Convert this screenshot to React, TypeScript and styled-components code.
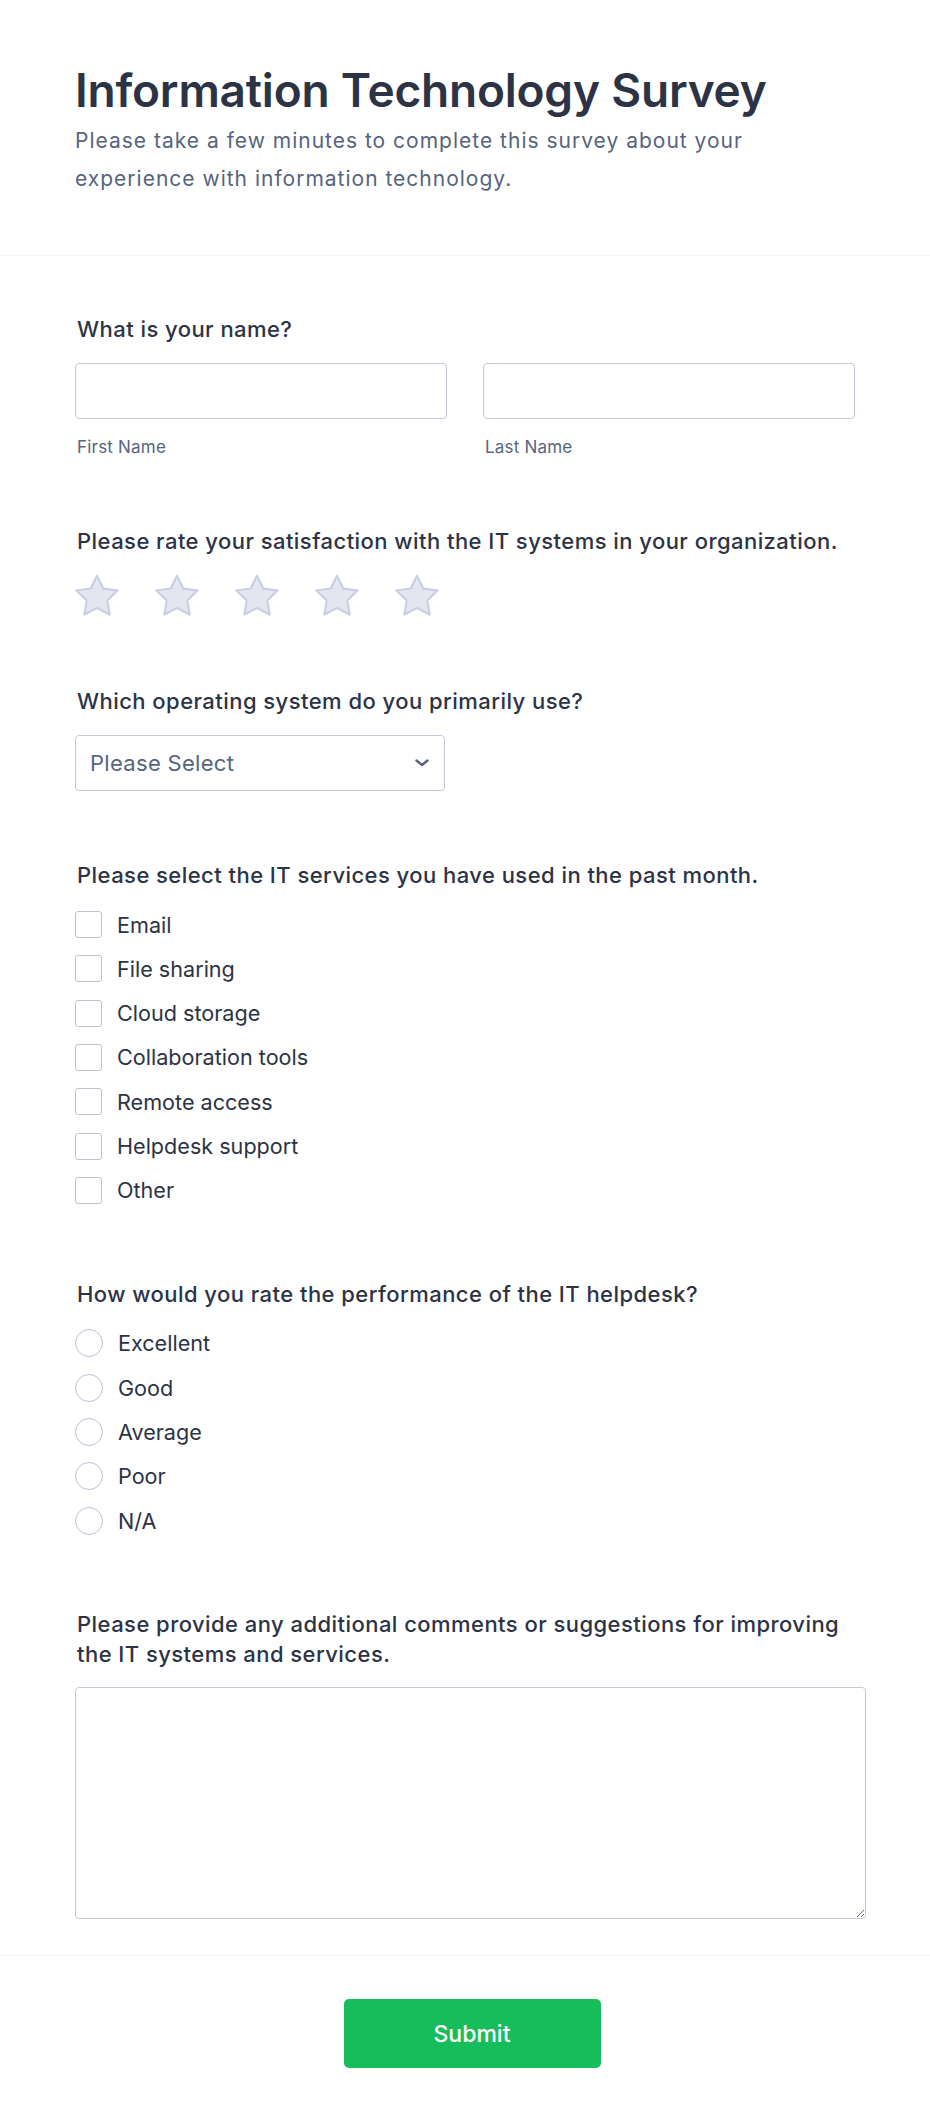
import styled, { createGlobalStyle } from "styled-components";

const GlobalStyle = createGlobalStyle`
  body {
    margin: 0;
    background: #ffffff;
    font-family: Inter, "Noto Sans", "Liberation Sans", sans-serif;
    color: #2c3345;
  }
  * {
    box-sizing: border-box;
  }
`;

const services = [
  "Email",
  "File sharing",
  "Cloud storage",
  "Collaboration tools",
  "Remote access",
  "Helpdesk support",
  "Other",
];

const ratings = ["Excellent", "Good", "Average", "Poor", "N/A"];

function Star() {
  return (
    <StarIcon viewBox="1.4 0.9 21.2 20.1" width="44" height="42">
      <path
        d="M12 1.6l3.05 6.2 6.85 1-4.95 4.8 1.17 6.8L12 17.2l-6.12 3.2 1.17-6.8L2.1 8.8l6.85-1z"
        fill="#e3e6f0"
        stroke="#c9cede"
        strokeWidth="1"
        strokeLinejoin="round"
      />
    </StarIcon>
  );
}

function Chevron() {
  return (
    <ChevronIcon viewBox="0 0 14 8" width="14" height="8">
      <polyline
        points="1.5,1.5 7,6 12.5,1.5"
        fill="none"
        stroke="#57647e"
        strokeWidth="2.4"
        strokeLinecap="round"
        strokeLinejoin="round"
      />
    </ChevronIcon>
  );
}

export default function App() {
  return (
    <>
      <GlobalStyle />
      <Page>
        <Header>
          <Title>Information Technology Survey</Title>
          <Subtitle>
            Please take a few minutes to complete this survey about your
            experience with information technology.
          </Subtitle>
        </Header>

        <FormBody>
          <Question $top={0}>
            <Label>What is your name?</Label>
            <NameRow>
              <NameField>
                <TextInput type="text" />
                <SubLabel>First Name</SubLabel>
              </NameField>
              <NameField>
                <TextInput type="text" />
                <SubLabel>Last Name</SubLabel>
              </NameField>
            </NameRow>
          </Question>

          <Question $top={67}>
            <Label>
              Please rate your satisfaction with the IT systems in your
              organization.
            </Label>
            <StarRow>
              {[0, 1, 2, 3, 4].map((i) => (
                <Star key={i} />
              ))}
            </StarRow>
          </Question>

          <Question $top={71}>
            <Label>Which operating system do you primarily use?</Label>
            <SelectBox>
              <span>Please Select</span>
              <Chevron />
            </SelectBox>
          </Question>

          <Question $top={69}>
            <Label>Please select the IT services you have used in the past month.</Label>
            <OptionList>
              {services.map((s) => (
                <Option key={s}>
                  <CheckBox type="checkbox" />
                  <span>{s}</span>
                </Option>
              ))}
            </OptionList>
          </Question>

          <Question $top={75}>
            <Label>How would you rate the performance of the IT helpdesk?</Label>
            <OptionList>
              {ratings.map((r) => (
                <Option key={r}>
                  <RadioDot type="radio" name="helpdesk" />
                  <span>{r}</span>
                </Option>
              ))}
            </OptionList>
          </Question>

          <Question $top={75}>
            <Label>
              Please provide any additional comments or suggestions for
              improving the IT systems and services.
            </Label>
            <TextArea />
          </Question>
        </FormBody>

        <Footer>
          <SubmitButton type="button">Submit</SubmitButton>
        </Footer>
      </Page>
    </>
  );
}

const Page = styled.div`
  width: 930px;
  min-height: 2125px;
  background: #ffffff;
`;

const Header = styled.header`
  padding: 63px 75px 58px;
  border-bottom: 1px solid #f1f1fb;
`;

const Title = styled.h1`
  margin: 0;
  font-size: 46px;
  line-height: 55px;
  font-weight: 600;
  color: #2c3345;
  letter-spacing: -0.2px;
`;

const Subtitle = styled.p`
  margin: 4px 0 0;
  font-size: 21px;
  line-height: 37.5px;
  letter-spacing: 1px;
  color: #57647e;
`;

const FormBody = styled.main`
  padding: 58px 64px 36px 75px;
  display: flex;
  flex-direction: column;
`;

const Question = styled.section<{ $top: number }>`
  margin-top: ${(p) => p.$top}px;
  display: flex;
  flex-direction: column;
`;

const Label = styled.div`
  font-size: 22px;
  line-height: 30px;
  font-weight: 500;
  letter-spacing: 0.45px;
  color: #2c3345;
  padding-left: 2px;
  margin-bottom: 19px;
`;

const NameRow = styled.div`
  display: flex;
  gap: 36px;
  width: 780px;
`;

const NameField = styled.div`
  flex: 1;
  display: flex;
  flex-direction: column;
`;

const TextInput = styled.input`
  height: 56px;
  width: 100%;
  border: 1px solid #c3cad8;
  border-radius: 4px;
  background: #ffffff;
  font: inherit;
  font-size: 21px;
  padding: 0 14px;
  outline: none;
`;

const SubLabel = styled.div`
  margin-top: 16px;
  font-size: 17px;
  line-height: 24px;
  letter-spacing: 0.2px;
  color: #57647e;
  padding-left: 2px;
`;

const StarRow = styled.div`
  display: flex;
  gap: 36px;
  height: 40px;
  align-items: center;
`;

const StarIcon = styled.svg`
  display: block;
  flex-shrink: 0;
`;

const SelectBox = styled.div`
  width: 370px;
  height: 56px;
  border: 1px solid #c3cad8;
  border-radius: 4px;
  display: flex;
  align-items: center;
  justify-content: space-between;
  padding: 0 15px 0 14px;
  font-size: 22px;
  letter-spacing: 0.3px;
  color: #57647e;
`;

const ChevronIcon = styled.svg`
  display: block;
`;

const OptionList = styled.div`
  display: flex;
  flex-direction: column;
  gap: 17.33px;
  margin-top: 2px;
`;

const Option = styled.label`
  display: flex;
  align-items: center;
  gap: 15px;
  height: 27px;
  font-size: 21.6px;
  color: #2c3345;
`;

const CheckBox = styled.input`
  appearance: none;
  margin: 0;
  width: 27px;
  height: 27px;
  border: 1px solid #bcc3d2;
  border-radius: 3px;
  background: #ffffff;
  flex-shrink: 0;
`;

const RadioDot = styled.input`
  appearance: none;
  margin: 0;
  width: 28px;
  height: 28px;
  border: 1px solid #bcc3d2;
  border-radius: 50%;
  background: #ffffff;
  flex-shrink: 0;
`;

const TextArea = styled.textarea`
  width: 791px;
  height: 232px;
  border: 1px solid #c3cad8;
  border-radius: 4px;
  resize: both;
  font: inherit;
  font-size: 21px;
  padding: 12px 14px;
  outline: none;
  margin-top: -1px;
`;

const Footer = styled.footer`
  border-top: 1px solid #f1f1fb;
  padding: 43px 61px 56px 75px;
  display: flex;
  justify-content: center;
`;

const SubmitButton = styled.button`
  width: 257px;
  height: 69px;
  border: none;
  border-radius: 5px;
  background: #18bd5b;
  color: #ffffff;
  font-family: inherit;
  font-size: 23px;
  font-weight: 500;
  cursor: pointer;
`;
